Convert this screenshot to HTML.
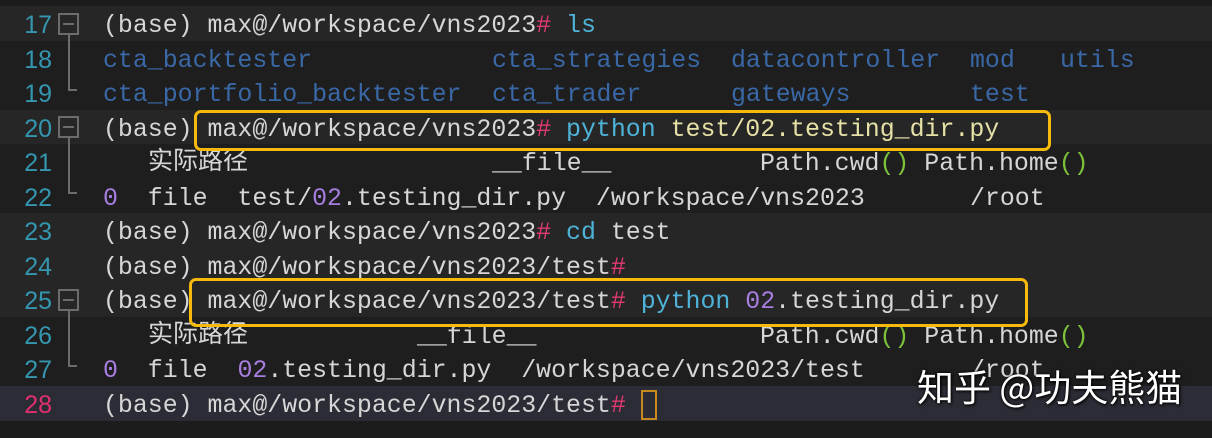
<!DOCTYPE html>
<html><head><meta charset="utf-8"><style>
html,body{margin:0;padding:0}
body{width:1212px;height:438px;background:#1c1c1c;position:relative;overflow:hidden;font-family:"Liberation Mono","Noto Sans CJK SC",monospace;font-size:24.9px;color:#d6d6d6}
.row{position:absolute;left:0;width:1212px;height:35px}
.ln{position:absolute;width:52px;text-align:right;color:#3596b0;line-height:35px;font-size:25px;font-family:"Liberation Sans",sans-serif;margin-top:2px}
.t{position:absolute;line-height:35px;white-space:pre;margin-top:3px}
.b{color:#3a68a6}.c{color:#4fb3d9}.h{color:#e23a6f}.p{color:#a77ee0}.y{color:#e6e1a6}.g{color:#7cc23b}
.cj{font-family:"Noto Sans CJK SC",sans-serif;font-size:25px;line-height:30px;margin-top:0}
.box{position:absolute;border:3px solid #f6b90c;border-radius:7px}
.fb{position:absolute;left:58px;width:17px;height:18px;border:2px solid #6c6c6c}
.fb:after{content:"";position:absolute;left:3px;right:3px;top:8px;height:2px;background:#6c6c6c}
.vl{position:absolute;left:68px;width:2px;background:#6c6c6c}
.hk{position:absolute;left:68px;width:9px;height:2px;background:#6c6c6c}
</style></head><body>
<div class="row" style="top:6px;background:#262626"></div>
<div class="row" style="top:40.5px;background:#1e1e1e"></div>
<div class="row" style="top:75px;background:#1e1e1e"></div>
<div class="row" style="top:109.5px;background:#262626"></div>
<div class="row" style="top:144px;background:#1e1e1e"></div>
<div class="row" style="top:178.5px;background:#1e1e1e"></div>
<div class="row" style="top:213px;background:#262626"></div>
<div class="row" style="top:247.5px;background:#262626"></div>
<div class="row" style="top:282px;background:#262626"></div>
<div class="row" style="top:316.5px;background:#1e1e1e"></div>
<div class="row" style="top:351px;background:#1e1e1e"></div>
<div class="row" style="top:385.5px;background:#2b2c35"></div>

<div class="ln" style="top:6px">17</div>
<div class="ln" style="top:40.5px">18</div>
<div class="ln" style="top:75px">19</div>
<div class="ln" style="top:109.5px">20</div>
<div class="ln" style="top:144px">21</div>
<div class="ln" style="top:178.5px">22</div>
<div class="ln" style="top:213px">23</div>
<div class="ln" style="top:247.5px">24</div>
<div class="ln" style="top:282px">25</div>
<div class="ln" style="top:316.5px">26</div>
<div class="ln" style="top:351px">27</div>
<div class="ln" style="top:385.5px;color:#e0306e">28</div>

<div class="fb" style="top:13px"></div><div class="vl" style="top:35px;height:56px"></div><div class="hk" style="top:89px"></div>
<div class="fb" style="top:116px"></div><div class="vl" style="top:138px;height:56px"></div><div class="hk" style="top:192px"></div>
<div class="fb" style="top:289px"></div><div class="vl" style="top:311px;height:56px"></div><div class="hk" style="top:365px"></div>

<div class="t" style="top:6px;left:103px">(base) max@/workspace/vns2023<span class="h">#</span> <span class="c">ls</span></div>
<div class="t b" style="top:40.5px;left:103px">cta_backtester</div>
<div class="t b" style="top:40.5px;left:492px">cta_strategies</div>
<div class="t b" style="top:40.5px;left:731px">datacontroller</div>
<div class="t b" style="top:40.5px;left:970px">mod</div>
<div class="t b" style="top:40.5px;left:1060px">utils</div>
<div class="t b" style="top:75px;left:103px">cta_portfolio_backtester</div>
<div class="t b" style="top:75px;left:492px">cta_trader</div>
<div class="t b" style="top:75px;left:731px">gateways</div>
<div class="t b" style="top:75px;left:970px">test</div>
<div class="t" style="top:109.5px;left:103px">(base) max@/workspace/vns2023<span class="h">#</span> <span class="c">python</span> <span class="y">test/02.testing_dir.py</span></div>
<div class="t cj" style="top:144px;left:148px">实际路径</div>
<div class="t" style="top:144px;left:492px">__file__</div>
<div class="t" style="top:144px;left:760px">Path.cwd<span class="g">()</span> Path.home<span class="g">()</span></div>
<div class="t" style="top:178.5px;left:103px"><span class="p">0</span>  file  test/<span class="p">02</span>.testing_dir.py  /workspace/vns2023</div>
<div class="t" style="top:178.5px;left:970px">/root</div>
<div class="t" style="top:213px;left:103px">(base) max@/workspace/vns2023<span class="h">#</span> <span class="c">cd</span> test</div>
<div class="t" style="top:247.5px;left:103px">(base) max@/workspace/vns2023/test<span class="h">#</span></div>
<div class="t" style="top:282px;left:103px">(base) max@/workspace/vns2023/test<span class="h">#</span> <span class="c">python</span> <span class="p">02</span>.testing_dir.py</div>
<div class="t cj" style="top:316.5px;left:148px">实际路径</div>
<div class="t" style="top:316.5px;left:417px">__file__</div>
<div class="t" style="top:316.5px;left:760px">Path.cwd<span class="g">()</span> Path.home<span class="g">()</span></div>
<div class="t" style="top:351px;left:103px"><span class="p">0</span>  file  <span class="p">02</span>.testing_dir.py  /workspace/vns2023/test</div>
<div class="t" style="top:351px;left:970px">/root</div>
<div class="t" style="top:385.5px;left:103px">(base) max@/workspace/vns2023/test<span class="h">#</span></div>
<div style="position:absolute;left:641px;top:390px;width:12px;height:26px;border:2px solid #c88a1c"></div>

<div class="box" style="left:194px;top:110px;width:851px;height:35px"></div>
<div class="box" style="left:189px;top:278px;width:833px;height:43px"></div>

<div style="position:absolute;left:917px;top:360px;font-family:'Noto Sans CJK SC',sans-serif;font-size:37px;color:#fff;line-height:50px;text-shadow:1px 1px 3px #000,0 0 2px #000;white-space:nowrap">知乎 @功夫熊猫</div>
</body></html>
